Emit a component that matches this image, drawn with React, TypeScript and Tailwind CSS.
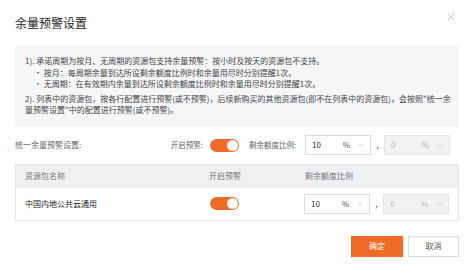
import React from 'react';

const Toggle = () => (
  <div className="w-[29px] h-[13px] rounded-full bg-[#f06b28] flex items-center justify-end pr-[1px]">
    <div className="w-[11px] h-[11px] rounded-full bg-white" />
  </div>
);

const PercentInput = ({ value, disabled }: { value: string; disabled?: boolean }) => (
  <div
    className={`w-[66px] h-[20px] border flex items-center pl-[6px] pr-[4px] text-[8px] ${
      disabled ? 'bg-[#f2f2f2] border-[#e6e6e6] text-[#bbb]' : 'bg-white border-[#dcdcdc] text-[#333]'
    }`}
  >
    <span className="flex-1">{value}</span>
    <span className={`mr-[8px] ${disabled ? 'text-[#bbb]' : 'text-[#555]'}`}>%</span>
    <svg width="6" height="4" viewBox="0 0 6 4" className="mr-[2px]">
      <path d="M0.5 0.8 L3 3.2 L5.5 0.8" fill="none" stroke="#c8c8c8" strokeWidth="0.8" />
    </svg>
  </div>
);

const RatioInputs = () => (
  <div className="flex items-center gap-[4px]">
    <PercentInput value="10" />
    <span className="text-[9px] text-[#666] w-[5px] text-center">,</span>
    <PercentInput value="0" disabled />
  </div>
);

export default function App() {
  return (
    <div
      className="w-[474px] h-[271px] bg-white text-[#333] px-[15px] overflow-hidden"
      style={{ fontFamily: '"Noto Sans CJK SC", "Noto Sans", sans-serif' }}
    >
      {/* Header */}
      <div className="flex items-center justify-between h-[45px]">
        <h1 className="text-[12px] text-[#222]">余量预警设置</h1>
        <svg width="8" height="8" viewBox="0 0 8 8" className="mr-[4px] -mt-[12px]">
          <path d="M1 1 L7 7 M7 1 L1 7" stroke="#bbb" strokeWidth="0.8" />
        </svg>
      </div>

      {/* Notice */}
      <div className="bg-[#f5f6f7] pl-[10px] pr-[8px] pt-[10px] pb-[11px] text-[8px] leading-[11.5px] text-[#444]">
        <p>1). 承诺周期为按月、无周期的资源包支持余量预警：按小时及按天的资源包不支持。</p>
        <p className="pl-[9px]">• 按月：每周期余量到达所设剩余额度比例时和余量用尽时分别提醒1次。</p>
        <p className="pl-[9px]">• 无周期：在有效期内余量到达所设剩余额度比例时和余量用尽时分别提醒1次。</p>
        <p className="mt-[3px]">
          2). 列表中的资源包，按各行配置进行预警(或不预警)，后续新购买的其他资源包(即不在列表中的资源包)，会按照"统一余量预警设置"中的配置进行预警(或不预警)。
        </p>
      </div>

      {/* Global setting */}
      <div className="flex items-center h-[37px] text-[7.5px] text-[#666]">
        <span className="flex-1 text-[8px]">统一余量预警设置:</span>
        <span className="mr-[7px]">开启预警:</span>
        <Toggle />
        <span className="ml-[10px] mr-[9px]">剩余额度比例:</span>
        <RatioInputs />
        <div className="w-[9px]" />
      </div>

      {/* Table */}
      <div className="border border-[#e4e6e8]">
        <div className="flex items-center h-[23px] bg-[#eef0f2] text-[8px] text-[#777] px-[9px]">
          <span className="w-[184px]">资源包名称</span>
          <span className="w-[96px]">开启预警</span>
          <span>剩余额度比例</span>
        </div>
        <div className="flex items-center h-[32px] text-[8px] text-[#222] px-[9px]">
          <span className="w-[185px]">中国内地公共云通用</span>
          <div className="flex-1">
            <Toggle />
          </div>
          <RatioInputs />
        </div>
      </div>

      {/* Footer */}
      <div className="flex justify-end gap-[5px] mt-[15px]">
        <button className="w-[52px] h-[21px] bg-[#f06b28] text-white text-[8px]">确定</button>
        <button className="w-[51px] h-[21px] bg-white border border-[#dcdcdc] text-[#555] text-[8px]">取消</button>
      </div>
    </div>
  );
}
